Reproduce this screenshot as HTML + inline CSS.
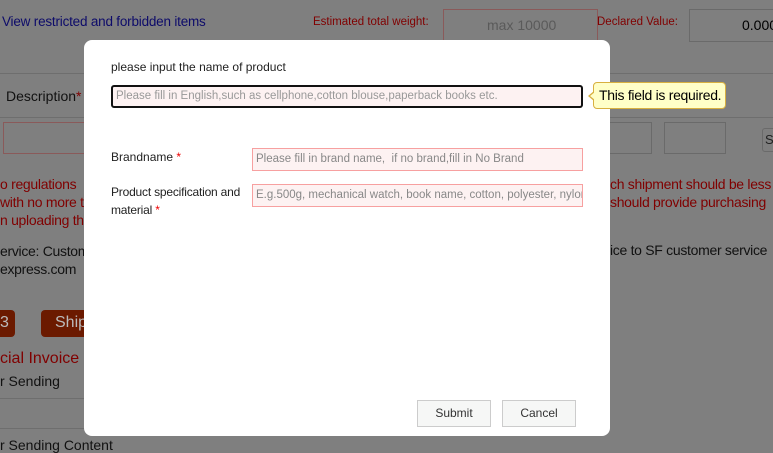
<!DOCTYPE html>
<html><head><meta charset="utf-8"><style>
body{margin:0;width:773px;height:449px;background:#7f7f7f;position:relative;overflow:hidden;font-family:"Liberation Sans",sans-serif;}
.a{position:absolute;white-space:nowrap;}
.bx{position:absolute;border:1px solid #6a6a6a;}
.modal{position:absolute;left:84px;top:40px;width:526px;height:396px;background:#fff;border-radius:8px;}
.in{position:absolute;background:#fdf2f2;border:1px solid #f7a0a0;font-size:11.5px;color:#888;padding-left:3px;box-sizing:border-box;line-height:20px;overflow:hidden;white-space:nowrap}
.btn{position:absolute;background:#f6f7f6;border:1px solid #ccc;font-size:12px;color:#333;text-align:center;box-sizing:border-box;line-height:24px}
.lb{position:absolute;font-size:12px;color:#222;line-height:20px}
.r{color:#e00}
</style></head><body>
<div class="a" style="left:2px;top:14px;font-size:13.5px;color:#0d0b6a;letter-spacing:-0.2px">View restricted and forbidden items</div>
<div class="a" style="left:313px;top:16px;font-size:11.5px;color:#800000">Estimated total weight:</div>
<div class="bx" style="left:443px;top:9px;width:153px;height:32px;border-color:#8a5a5a;background:#7f7f7f;"></div>
<div class="a" style="left:487px;top:17px;font-size:14px;color:#5a5a5a">max 10000</div>
<div class="a" style="left:597px;top:16px;font-size:11.5px;color:#800000">Declared Value:</div>
<div class="bx" style="left:689px;top:9px;width:90px;height:31px;"></div>
<div class="a" style="left:742px;top:17px;font-size:14px;color:#000">0.000</div>
<div style="position:absolute;left:0;top:73px;width:773px;height:1px;background:#6e6e6e"></div>
<div class="a" style="left:6px;top:88px;font-size:14px;color:#111">Description<span style="color:#800000">*</span></div>
<div style="position:absolute;left:0;top:117px;width:773px;height:1px;background:#6e6e6e"></div>
<div class="bx" style="left:3px;top:122px;width:90px;height:30px;border-color:#8a5a5a"></div>
<div class="bx" style="left:590px;top:122px;width:60px;height:30px;"></div>
<div class="bx" style="left:664px;top:122px;width:60px;height:30px;"></div>
<div class="bx" style="left:762px;top:128px;width:20px;height:22px;border-radius:3px"></div>
<div class="a" style="left:765px;top:132px;font-size:13px;color:#222">S</div>
<div class="a" style="left:0;top:175px;font-size:14px;color:#800000;line-height:18px;letter-spacing:-0.3px">o regulations<br>with no more t<br>n uploading th</div>
<div class="a" style="left:610px;top:175px;font-size:14px;color:#800000;line-height:18px;letter-spacing:-0.3px">ch shipment should be less<br>should provide purchasing</div>
<div class="a" style="left:0;top:242px;font-size:14px;color:#111;line-height:18px;letter-spacing:-0.3px">ervice: Custom<br>express.com</div>
<div class="a" style="left:610px;top:242px;font-size:14px;color:#111;letter-spacing:-0.3px">ice to SF customer service</div>
<div style="position:absolute;left:-10px;top:310px;width:25px;height:27px;background:#6b1a00;border-radius:4px"></div>
<div class="a" style="left:0;top:314px;font-size:16px;color:#bbb">3</div>
<div style="position:absolute;left:41px;top:310px;width:60px;height:27px;background:#6b1a00;border-radius:4px"></div>
<div class="a" style="left:55px;top:314px;font-size:16px;color:#bbb">Ship</div>
<div class="a" style="left:0;top:350px;font-size:16px;color:#800000">cial Invoice</div>
<div class="a" style="left:0;top:373px;font-size:14px;color:#111">r Sending</div>
<div style="position:absolute;left:0;top:398px;width:100px;height:1px;background:#6e6e6e"></div>
<div style="position:absolute;left:0;top:428px;width:100px;height:1px;background:#6e6e6e"></div>
<div class="a" style="left:0;top:437px;font-size:14px;color:#111">r Sending Content</div>

<div class="modal">
<div class="lb" style="left:27px;top:17px">please input the name of product</div>
<div class="in" style="left:27px;top:45px;width:472px;height:23px;border:2px solid #111;border-radius:3px;color:#999;line-height:19px">Please fill in English,such as cellphone,cotton blouse,paperback books etc.</div>
<div class="lb" style="left:27px;top:107px">Brandname <span class="r">*</span></div>
<div class="in" style="left:168px;top:108px;width:331px;height:23px">Please fill in brand name,&nbsp; if no brand,fill in No Brand</div>
<div class="lb" style="left:27px;top:143px;line-height:18px;letter-spacing:-0.2px">Product specification and<br>material <span class="r">*</span></div>
<div class="in" style="left:168px;top:144px;width:331px;height:23px">E.g.500g, mechanical watch, book name, cotton, polyester, nylon</div>
<div class="btn" style="left:333px;top:360px;width:74px;height:27px">Submit</div>
<div class="btn" style="left:418px;top:360px;width:74px;height:27px">Cancel</div>
</div>
<div style="position:absolute;left:593px;top:82px;width:133px;height:27px;background:#ffffc8;border:1px solid #d8b040;border-radius:4px;box-sizing:border-box;font-size:14px;line-height:25px;padding-left:5px;color:#000;white-space:nowrap;letter-spacing:-0.3px">This field is required.</div>
<div style="position:absolute;left:588px;top:91px;width:0;height:0;border-top:5px solid transparent;border-bottom:5px solid transparent;border-right:6px solid #d8b040"></div>
<div style="position:absolute;left:590px;top:92px;width:0;height:0;border-top:4px solid transparent;border-bottom:4px solid transparent;border-right:5px solid #ffffc8"></div>
</body></html>
